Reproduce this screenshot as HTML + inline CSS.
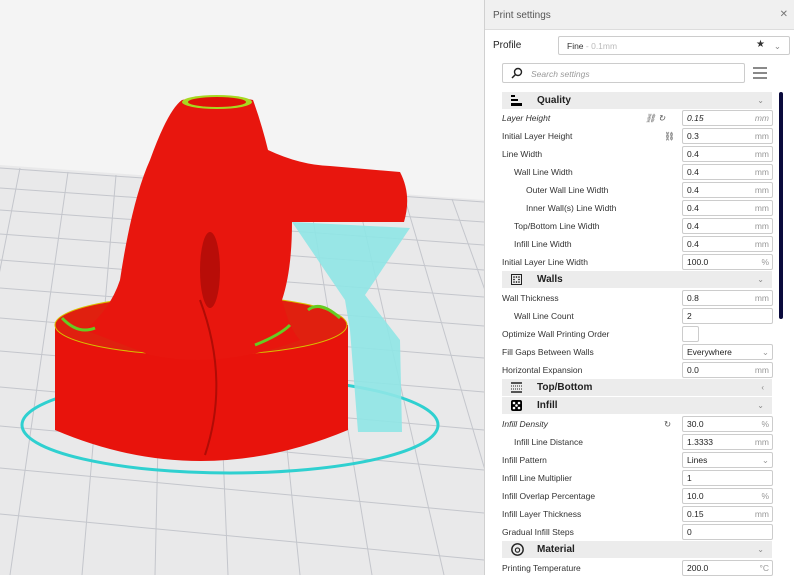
<!DOCTYPE html>
<html><head><style>
*{margin:0;padding:0;box-sizing:border-box}
body{width:794px;height:575px;overflow:hidden;font-family:"Liberation Sans",sans-serif;background:#fff;position:relative}
#vp{position:absolute;left:0;top:0}
#panel{position:absolute;left:484px;top:0;width:310px;height:575px;background:#fff;border-left:1px solid #d0d0d0;font-size:8.5px;color:#333}
.hdr{height:30px;background:#f0f0f0;border-bottom:1px solid #ddd;padding:10px 0 0 8px;font-size:10px;color:#555}
.x{position:absolute;right:6px;top:9px;color:#777;font-size:10px}
.row{position:absolute;left:17px;width:273px;height:18px;line-height:18px}
.inp{position:absolute;left:180px;top:1px;width:91px;height:16px;border:1px solid #ccc;border-radius:2px;padding-left:4px;line-height:14px;color:#222}
.u{position:absolute;right:3px;color:#999}
.cat{position:absolute;left:17px;width:270px;height:17px;background:#ececec;font-weight:bold;font-size:10px;line-height:17px;padding-left:35px;color:#222}
.cat .ch{position:absolute;right:8px;font-weight:normal;color:#888;font-size:8px}
.ic{position:absolute;left:9px;top:3px;width:11px;height:11px}
</style></head><body>
<svg id="vp" width="484" height="575" viewBox="0 0 484 575">
<rect width="484" height="575" fill="#f4f4f4"/>
<polygon points="0,165 484,200 484,575 0,575" fill="#e9e9ea"/>
<g stroke="#c4c6cc" stroke-width="1">
<line x1="0" y1="168" x2="484" y2="202"/><line x1="0" y1="188" x2="484" y2="222"/><line x1="0" y1="210" x2="484" y2="245"/><line x1="0" y1="234" x2="484" y2="270"/><line x1="0" y1="260" x2="484" y2="297"/><line x1="0" y1="288" x2="484" y2="326"/><line x1="0" y1="318" x2="484" y2="358"/><line x1="0" y1="351" x2="484" y2="392"/><line x1="0" y1="387" x2="484" y2="430"/><line x1="0" y1="426" x2="484" y2="470"/><line x1="0" y1="468" x2="484" y2="513"/><line x1="0" y1="514" x2="484" y2="560"/>
<line x1="20" y1="168" x2="-60" y2="575"/><line x1="68" y1="172" x2="10" y2="575"/><line x1="116" y1="175" x2="82" y2="575"/><line x1="164" y1="179" x2="155" y2="575"/><line x1="212" y1="182" x2="228" y2="575"/><line x1="260" y1="186" x2="300" y2="575"/><line x1="308" y1="189" x2="372" y2="575"/><line x1="356" y1="192" x2="444" y2="575"/><line x1="404" y1="196" x2="516" y2="575"/><line x1="452" y1="199" x2="588" y2="575"/>
</g>
<ellipse cx="230" cy="425" rx="208" ry="48" fill="none" stroke="#2fd0d0" stroke-width="3"/>
<polygon points="292,222 410,228 365,295 400,340 402,432 358,432 350,330 345,300" fill="#8fe6e6" opacity=".9"/>
<path d="M55,325 L55,430 Q200,492 348,430 L348,325 Z" fill="#e8130c"/>
<ellipse cx="201" cy="325" rx="146" ry="30" fill="#e0200f" stroke="#d8c000" stroke-width="1"/>
<path d="M85,330 Q110,310 120,280 Q132,200 150,160 Q168,110 182,100 Q217,92 253,100 Q262,125 268,150 Q300,165 330,166 L400,172 Q412,195 404,222 L292,222 Q292,270 282,300 Q290,330 300,340 Q220,370 150,355 Z" fill="#e8160e"/>
<ellipse cx="217" cy="102" rx="35" ry="7" fill="#a8d820"/>
<ellipse cx="217" cy="102" rx="29" ry="5" fill="#e01008"/>
<ellipse cx="210" cy="270" rx="10" ry="38" fill="#b80d08"/>
<path d="M200,300 Q230,380 205,455" stroke="#b00c06" stroke-width="2" fill="none"/>
<path d="M62,318 Q78,335 95,328 M255,345 Q280,335 290,325 M308,310 Q320,300 340,318" stroke="#6c2" stroke-width="3" fill="none"/>
</svg>
<div id="panel">
<div class="hdr">Print settings</div><div class="x">✕</div>
<div style="position:absolute;left:8px;top:40px;font-size:10px;color:#222">Profile</div>
<div style="position:absolute;left:73px;top:36px;width:232px;height:19px;border:1px solid #ccc;border-radius:2px;padding:4px 0 0 8px;font-size:8.5px">Fine <span style="color:#bbb">- 0.1mm</span><span style="position:absolute;right:24px;top:2px;font-size:10px">★</span><span style="position:absolute;right:8px;color:#888">⌄</span></div>
<div style="position:absolute;left:17px;top:63px;width:243px;height:20px;border:1px solid #ccc;border-radius:2px;padding:5px 0 0 28px;font-style:italic;color:#999">Search settings</div>
<svg style="position:absolute;left:26px;top:67px" width="12" height="12"><circle cx="7" cy="5" r="3.5" stroke="#222" stroke-width="1.4" fill="none"/><line x1="4.5" y1="7.5" x2="1" y2="11" stroke="#222" stroke-width="1.5"/></svg>
<svg style="position:absolute;left:268px;top:67px" width="14" height="12"><path d="M0,1H14M0,6H14M0,11H14" stroke="#444" stroke-width="1.2"/></svg>
<div style="position:absolute;left:294px;top:92px;width:4px;height:227px;background:#0a0a3c;border-radius:2px"></div>

<div class="cat" style="top:92px"><svg class="ic" viewBox="0 0 11 11"><rect x="0" y="0" width="4" height="2"/><rect x="0" y="4" width="7" height="2"/><rect x="0" y="8" width="11" height="3"/></svg>Quality<span class="ch">⌄</span></div>
<div class="row" style="top:109px;font-style:italic">Layer Height<span style="position:absolute;left:143px;color:#555">⛓ ↻</span><div class="inp">0.15<span class="u">mm</span></div></div>
<div class="row" style="top:127px">Initial Layer Height<span style="position:absolute;left:162px;color:#555">⛓</span><div class="inp">0.3<span class="u">mm</span></div></div>
<div class="row" style="top:145px">Line Width<div class="inp">0.4<span class="u">mm</span></div></div>
<div class="row" style="top:163px;padding-left:12px">Wall Line Width<div class="inp">0.4<span class="u">mm</span></div></div>
<div class="row" style="top:181px;padding-left:24px">Outer Wall Line Width<div class="inp">0.4<span class="u">mm</span></div></div>
<div class="row" style="top:199px;padding-left:24px">Inner Wall(s) Line Width<div class="inp">0.4<span class="u">mm</span></div></div>
<div class="row" style="top:217px;padding-left:12px">Top/Bottom Line Width<div class="inp">0.4<span class="u">mm</span></div></div>
<div class="row" style="top:235px;padding-left:12px">Infill Line Width<div class="inp">0.4<span class="u">mm</span></div></div>
<div class="row" style="top:253px">Initial Layer Line Width<div class="inp">100.0<span class="u">%</span></div></div>
<div class="cat" style="top:271px"><svg class="ic" viewBox="0 0 11 11"><rect x=".5" y=".5" width="10" height="10" fill="none" stroke="#222"/><circle cx="3" cy="3" r=".8"/><circle cx="5.5" cy="3" r=".8"/><circle cx="8" cy="3" r=".8"/><circle cx="3" cy="8" r=".8"/><circle cx="5.5" cy="8" r=".8"/><circle cx="8" cy="8" r=".8"/><circle cx="3" cy="5.5" r=".8"/><circle cx="8" cy="5.5" r=".8"/></svg>Walls<span class="ch">⌄</span></div>
<div class="row" style="top:289px">Wall Thickness<div class="inp">0.8<span class="u">mm</span></div></div>
<div class="row" style="top:307px;padding-left:12px">Wall Line Count<div class="inp">2</div></div>
<div class="row" style="top:325px">Optimize Wall Printing Order<div class="inp" style="width:17px"></div></div>
<div class="row" style="top:343px">Fill Gaps Between Walls<div class="inp">Everywhere<span class="u">⌄</span></div></div>
<div class="row" style="top:361px">Horizontal Expansion<div class="inp">0.0<span class="u">mm</span></div></div>
<div class="cat" style="top:379px"><svg class="ic" viewBox="0 0 11 11"><path d="M0,1H11M0,10H11" stroke="#222" stroke-width="1.5"/><path d="M0,4H11M0,7H11" stroke="#222" stroke-dasharray="1,1"/></svg>Top/Bottom<span class="ch">‹</span></div>
<div class="cat" style="top:397px"><svg class="ic" viewBox="0 0 11 11"><rect width="11" height="11" rx="2"/><circle cx="3" cy="3" r="1.3" fill="#fff"/><circle cx="8" cy="3" r="1.3" fill="#fff"/><circle cx="5.5" cy="5.5" r="1.3" fill="#fff"/><circle cx="3" cy="8" r="1.3" fill="#fff"/><circle cx="8" cy="8" r="1.3" fill="#fff"/></svg>Infill<span class="ch">⌄</span></div>
<div class="row" style="top:415px;font-style:italic">Infill Density<span style="position:absolute;left:162px;color:#555;font-style:normal">↻</span><div class="inp" style="font-style:normal">30.0<span class="u">%</span></div></div>
<div class="row" style="top:433px;padding-left:12px">Infill Line Distance<div class="inp">1.3333<span class="u">mm</span></div></div>
<div class="row" style="top:451px">Infill Pattern<div class="inp">Lines<span class="u">⌄</span></div></div>
<div class="row" style="top:469px">Infill Line Multiplier<div class="inp">1</div></div>
<div class="row" style="top:487px">Infill Overlap Percentage<div class="inp">10.0<span class="u">%</span></div></div>
<div class="row" style="top:505px">Infill Layer Thickness<div class="inp">0.15<span class="u">mm</span></div></div>
<div class="row" style="top:523px">Gradual Infill Steps<div class="inp">0</div></div>
<div class="cat" style="top:541px"><svg class="ic" viewBox="0 0 11 11" style="top:2px;width:13px;height:13px"><circle cx="5.5" cy="5.5" r="4.8" fill="none" stroke="#222" stroke-width="1.2"/><circle cx="5.5" cy="6" r="1.8" fill="none" stroke="#222"/></svg>Material<span class="ch">⌄</span></div>
<div class="row" style="top:559px">Printing Temperature<div class="inp">200.0<span class="u">°C</span></div></div>
</div>
</body></html>
